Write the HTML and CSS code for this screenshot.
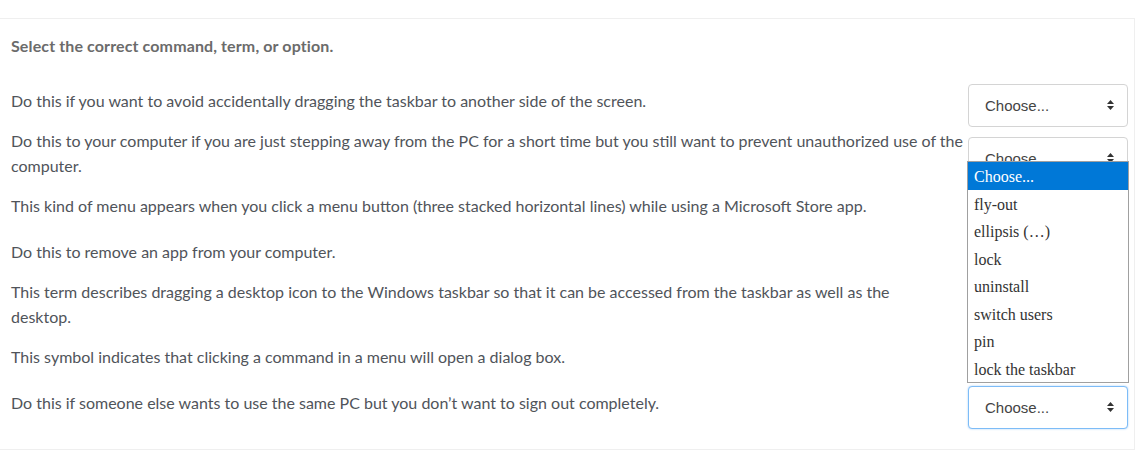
FILE: index.html
```html
<!DOCTYPE html>
<html lang="en">
<head>
<meta charset="utf-8">
<title>Match question</title>
<link rel="stylesheet" href="styles.css">
</head>
<body>
<div class="que">
  <div class="prompt">Select the correct command, term, or option.</div>
  <div class="answers">
    <div class="row">
      <div class="text">Do this if you want to avoid accidentally dragging the taskbar to another side of the screen.</div>
      <div class="select"><span>Choose...</span><svg class="arrows" width="7" height="10" viewBox="0 0 7 10"><path d="M3.5 0L7 4H0z M0 6h7L3.5 10z" fill="#333"/></svg></div>
    </div>
    <div class="row">
      <div class="text">Do this to your computer if you are just stepping away from the PC for a short time but you still want to prevent unauthorized use of the computer.</div>
      <div class="select"><span>Choose...</span><svg class="arrows" width="7" height="10" viewBox="0 0 7 10"><path d="M3.5 0L7 4H0z M0 6h7L3.5 10z" fill="#333"/></svg>
        <ul class="dropdown">
          <li class="active">Choose...</li>
          <li>fly-out</li>
          <li>ellipsis (…)</li>
          <li>lock</li>
          <li>uninstall</li>
          <li>switch users</li>
          <li>pin</li>
          <li>lock the taskbar</li>
        </ul>
      </div>
    </div>
    <div class="row">
      <div class="text">This kind of menu appears when you click a menu button (three stacked horizontal lines) while using a Microsoft Store app.</div>
      <div class="select covered"><span>Choose...</span><svg class="arrows" width="7" height="10" viewBox="0 0 7 10"><path d="M3.5 0L7 4H0z M0 6h7L3.5 10z" fill="#333"/></svg></div>
    </div>
    <div class="row">
      <div class="text">Do this to remove an app from your computer.</div>
      <div class="select covered"><span>Choose...</span><svg class="arrows" width="7" height="10" viewBox="0 0 7 10"><path d="M3.5 0L7 4H0z M0 6h7L3.5 10z" fill="#333"/></svg></div>
    </div>
    <div class="row">
      <div class="text">This term describes dragging a desktop icon to the Windows taskbar so that it can be accessed from the taskbar as well as the<br>desktop.</div>
      <div class="select covered"><span>Choose...</span><svg class="arrows" width="7" height="10" viewBox="0 0 7 10"><path d="M3.5 0L7 4H0z M0 6h7L3.5 10z" fill="#333"/></svg></div>
    </div>
    <div class="row">
      <div class="text">This symbol indicates that clicking a command in a menu will open a dialog box.</div>
      <div class="select covered"><span>Choose...</span><svg class="arrows" width="7" height="10" viewBox="0 0 7 10"><path d="M3.5 0L7 4H0z M0 6h7L3.5 10z" fill="#333"/></svg></div>
    </div>
    <div class="row">
      <div class="text">Do this if someone else wants to use the same PC but you don’t want to sign out completely.</div>
      <div class="select focus"><span>Choose...</span><svg class="arrows" width="7" height="10" viewBox="0 0 7 10"><path d="M3.5 0L7 4H0z M0 6h7L3.5 10z" fill="#333"/></svg></div>
    </div>
  </div>
</div>
</body>
</html>
```

FILE: styles.css
```css
html, body {
  margin: 0;
  padding: 0;
  background: #fff;
}

body {
  font-family: Lato, "Liberation Sans", sans-serif;
  color: #50545a;
}

.que {
  box-sizing: border-box;
  width: 1135px;
  margin-top: 18px;
  border-top: 1px solid #efefef;
  border-right: 1px solid #efefef;
  border-bottom: 1px solid #efefef;
  padding: 17px 6px 19px 11px;
}

.prompt {
  font-size: 16px;
  font-weight: 700;
  letter-spacing: 0.12px;
  line-height: 20px;
  color: #6b6b6b;
  margin-bottom: 26.5px;
}

.row {
  display: flex;
  align-items: center;
  min-height: 45.5px;
}

.text {
  flex: 1;
  font-size: 16px;
  line-height: 25px;
  padding: 0 2px 10px 0;
}

.select {
  position: relative;
  box-sizing: border-box;
  width: 160px;
  height: 42.5px;
  flex: none;
  display: flex;
  align-items: center;
  justify-content: space-between;
  padding: 0 13px 0 16px;
  border: 1px solid #d4d4d4;
  border-radius: 4px;
  background: #fff;
  font-family: "Liberation Sans", Arial, sans-serif;
  font-size: 15px;
  color: #444;
}

.select.covered span,
.select.covered .arrows {
  visibility: hidden;
}

.select.focus {
  border-color: #7dbcf7;
  box-shadow: 0 0 2px rgba(40, 140, 240, 0.45);
}

.arrows {
  display: block;
}

.dropdown {
  position: absolute;
  top: 23.5px;
  left: -2px;
  width: 162px;
  box-sizing: border-box;
  margin: 0;
  padding: 0;
  list-style: none;
  border: 1px solid #a0a0a0;
  background: #fff;
  font-family: "Liberation Serif", serif;
  font-size: 16px;
  color: #333;
  z-index: 5;
}

.dropdown li {
  height: 27.5px;
  box-sizing: border-box;
  padding: 2px 0 0 6px;
  line-height: 25.5px;
}

.dropdown li.active {
  background: #0078d7;
  color: #fff;
}
```
